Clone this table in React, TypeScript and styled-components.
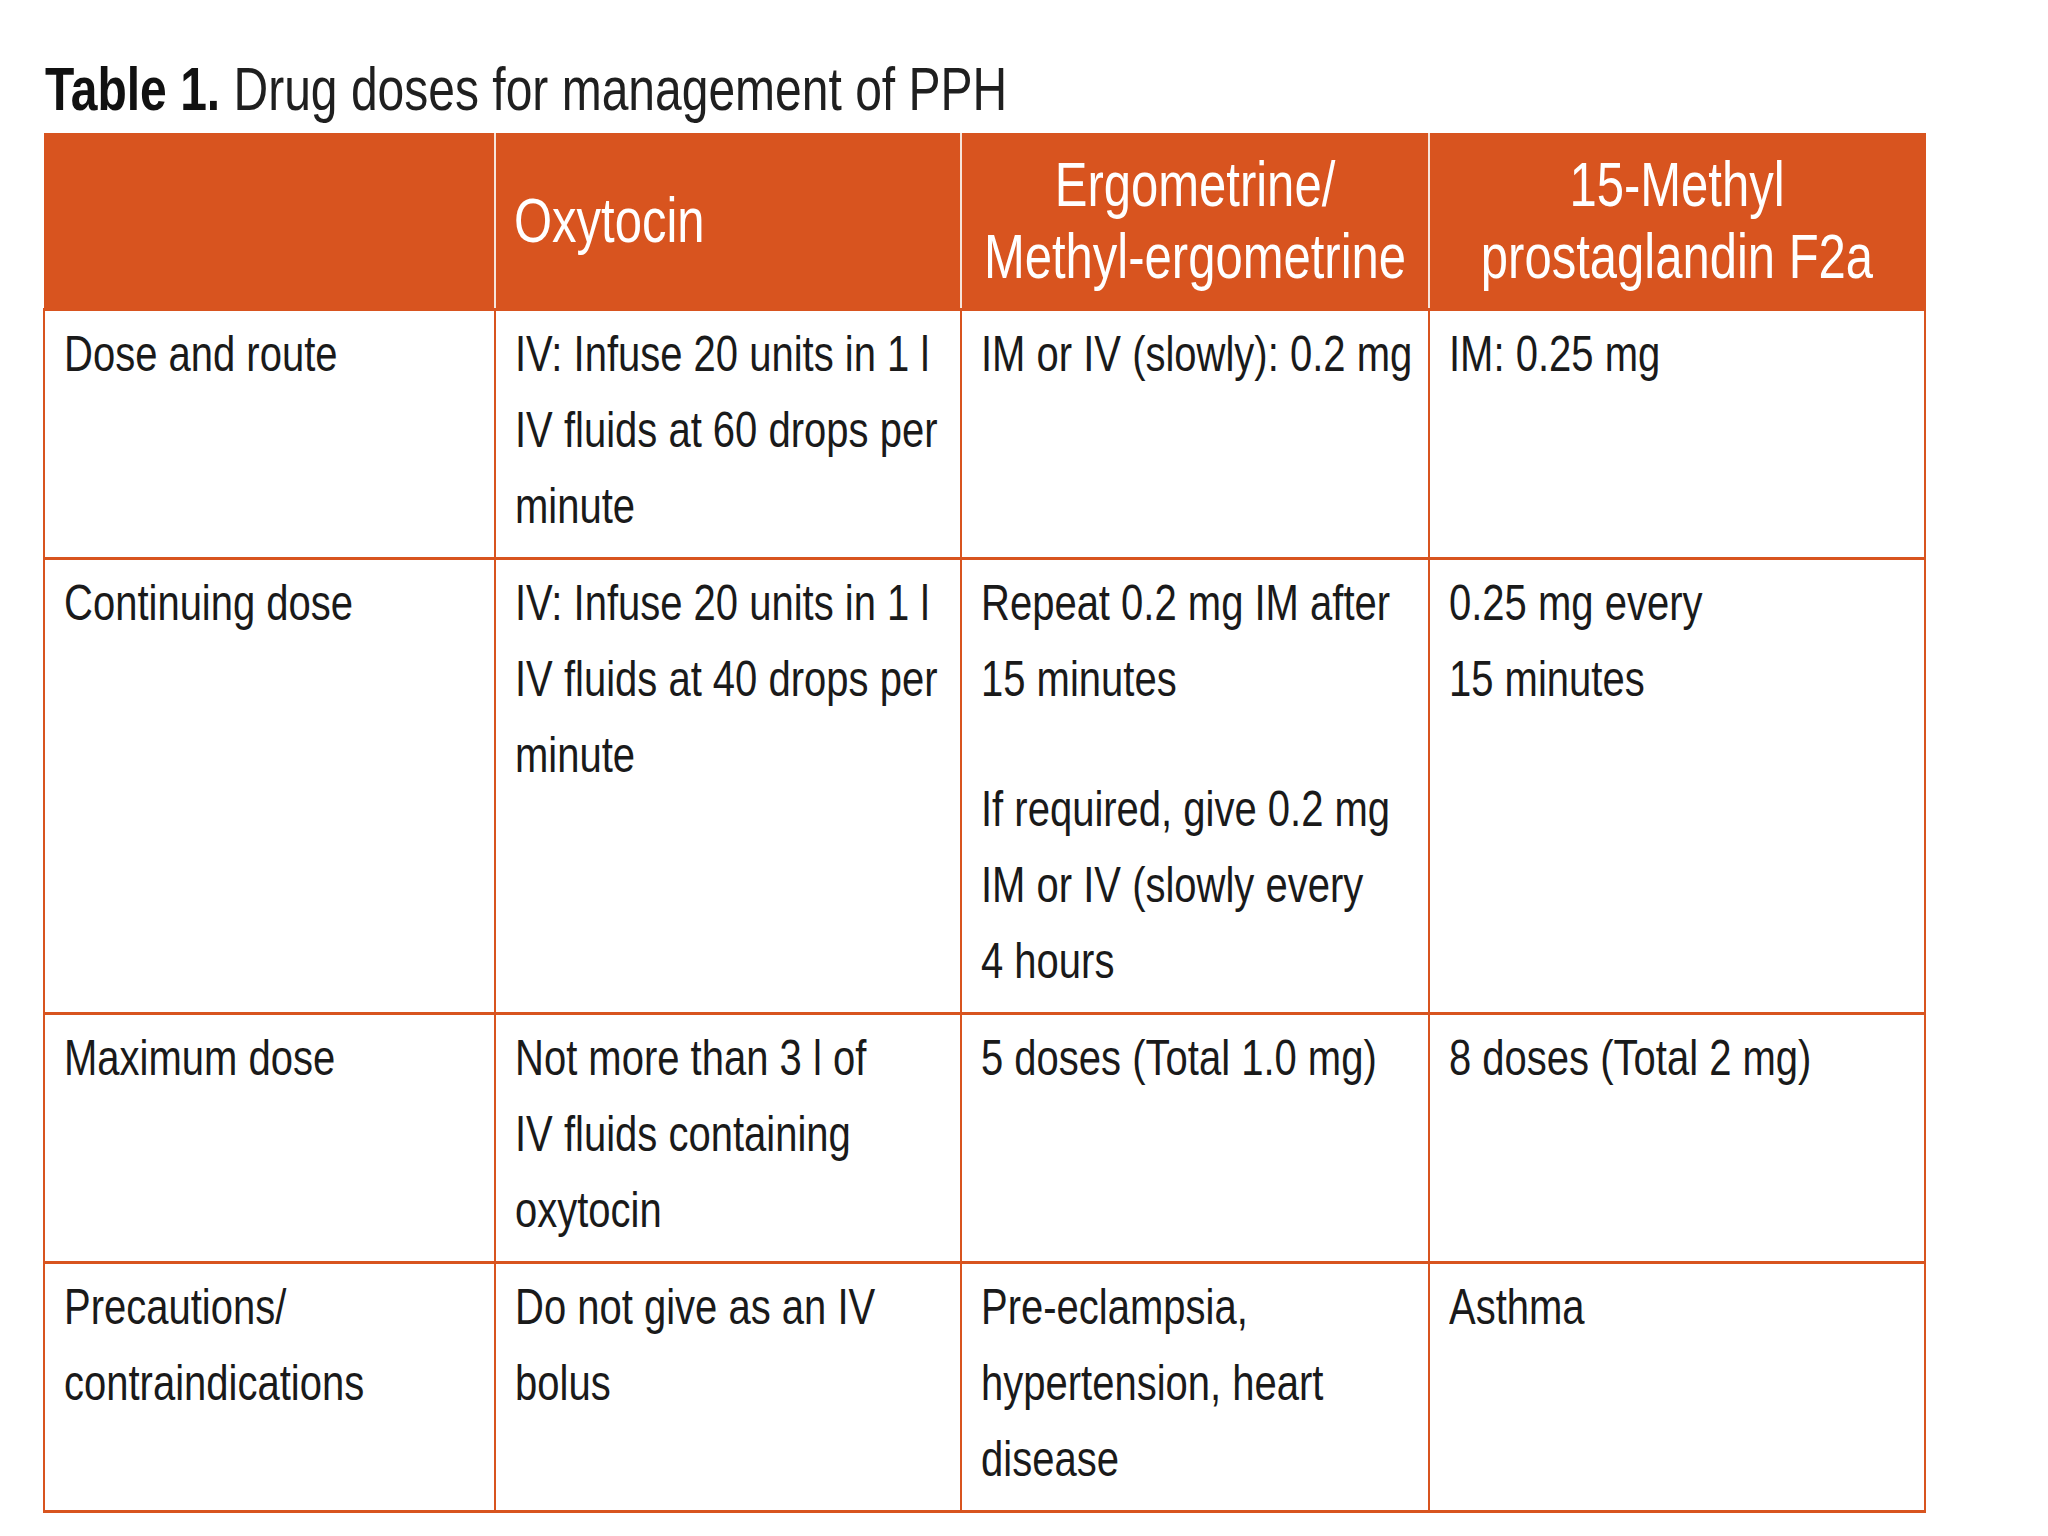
import styled, { createGlobalStyle } from "styled-components";

const GlobalStyle = createGlobalStyle`
  body {
    margin: 0;
    background: #ffffff;
    font-family: "Liberation Sans", Arial, sans-serif;
  }
`;

// the printed face is tall and narrow: stretch each line of text vertically
const Line = styled.span`
  display: block;
  white-space: nowrap;
  transform: scaleY(1.27);
  transform-origin: center;
`;

const Page = styled.div`
  padding: 58px 0 40px 43px;
`;

const Title = styled.h1`
  margin: 0 0 11px;
  padding-left: 2px;
  font-size: 48px;
  line-height: 64px;
  font-weight: 400;
  color: #1f1f1f;
`;

const Strong = styled.span`
  font-weight: 700;
  color: #111;
`;

const Table = styled.table`
  border-collapse: collapse;
  table-layout: fixed;
  width: 1881px;
`;

const HeadRow = styled.tr`
  height: 176px;
`;

const HeadCell = styled.th<{ $align?: "left" | "center" }>`
  padding: 0 18px;
  background: #d8541f;
  color: #ffffff;
  font-size: 49px;
  line-height: 72px;
  font-weight: 400;
  text-align: ${({ $align }) => $align ?? "center"};
  vertical-align: middle;
  border-right: 2px solid #f7e4da;
  border-bottom: 3px solid #d8541f;

  &:last-child {
    border-right: 2px solid #d8541f;
  }
`;

const Cell = styled.td`
  padding: 4px 16px 14px 19px;
  color: #1a1a1a;
  font-size: 40px;
  line-height: 76px;
  vertical-align: top;
  border: 2px solid #d8541f;
  border-top-width: 3px;
  border-bottom-width: 3px;
`;

const Para = styled.div`
  & + & {
    margin-top: 54px;
  }
`;

type Row = { label: string[]; cells: string[][][] };

const rows: Row[] = [
  {
    label: ["Dose and route"],
    cells: [
      [["IV: Infuse 20 units in 1 l", "IV fluids at 60 drops per", "minute"]],
      [["IM or IV (slowly): 0.2 mg"]],
      [["IM: 0.25 mg"]],
    ],
  },
  {
    label: ["Continuing dose"],
    cells: [
      [["IV: Infuse 20 units in 1 l", "IV fluids at 40 drops per", "minute"]],
      [
        ["Repeat 0.2 mg IM after", "15 minutes"],
        ["If required, give 0.2 mg", "IM or IV (slowly every", "4 hours"],
      ],
      [["0.25 mg every", "15 minutes"]],
    ],
  },
  {
    label: ["Maximum dose"],
    cells: [
      [["Not more than 3 l of", "IV fluids containing", "oxytocin"]],
      [["5 doses (Total 1.0 mg)"]],
      [["8 doses (Total 2 mg)"]],
    ],
  },
  {
    label: ["Precautions/", "contraindications"],
    cells: [
      [["Do not give as an IV", "bolus"]],
      [["Pre-eclampsia,", "hypertension, heart", "disease"]],
      [["Asthma"]],
    ],
  },
];

const Lines = ({ lines }: { lines: string[] }) => (
  <>
    {lines.map((l, i) => (
      <Line key={i}>{l}</Line>
    ))}
  </>
);

export default function App() {
  return (
    <Page>
      <GlobalStyle />
      <Title>
        <Line>
          <Strong>Table 1.</Strong> Drug doses for management of PPH
        </Line>
      </Title>
      <Table>
        <colgroup>
          <col style={{ width: 451 }} />
          <col style={{ width: 466 }} />
          <col style={{ width: 468 }} />
          <col style={{ width: 496 }} />
        </colgroup>
        <thead>
          <HeadRow>
            <HeadCell />
            <HeadCell $align="left">
              <Lines lines={["Oxytocin"]} />
            </HeadCell>
            <HeadCell>
              <Lines lines={["Ergometrine/", "Methyl-ergometrine"]} />
            </HeadCell>
            <HeadCell>
              <Lines lines={["15-Methyl", "prostaglandin F2a"]} />
            </HeadCell>
          </HeadRow>
        </thead>
        <tbody>
          {rows.map((row, r) => (
            <tr key={r}>
              <Cell>
                <Lines lines={row.label} />
              </Cell>
              {row.cells.map((paras, c) => (
                <Cell key={c}>
                  {paras.map((p, i) => (
                    <Para key={i}>
                      <Lines lines={p} />
                    </Para>
                  ))}
                </Cell>
              ))}
            </tr>
          ))}
        </tbody>
      </Table>
    </Page>
  );
}
